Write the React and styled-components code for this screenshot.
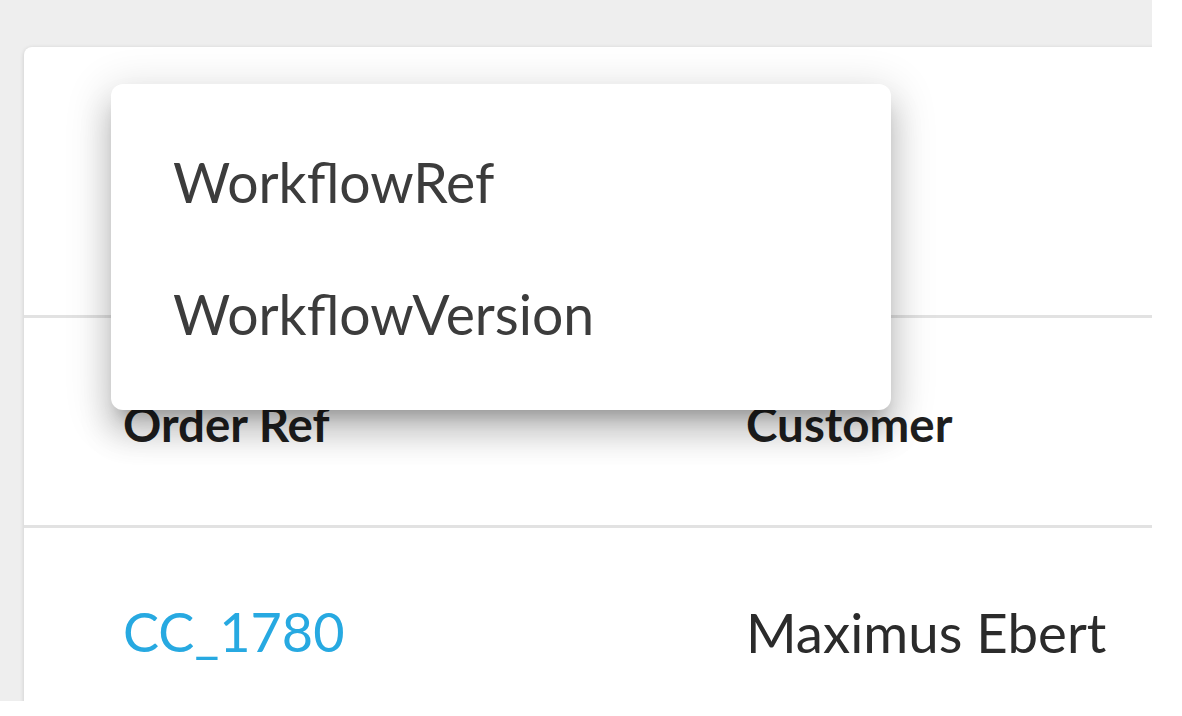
import React from "react";
import styled, { createGlobalStyle } from "styled-components";

const Global = createGlobalStyle`
  html, body { margin: 0; padding: 0; background: #ffffff; }
  body { font-family: Lato, "Open Sans", sans-serif; }
  * { box-sizing: border-box; }
`;

const Viewport = styled.div`
  position: relative;
  width: 1152px;
  height: 701px;
  background: #eeeeee;
  overflow: hidden;
  padding: 47px 0 0 24px;
`;

const Card = styled.div`
  width: 1160px;
  height: 720px;
  background: #ffffff;
  border-radius: 8px 0 0 0;
  box-shadow: 0 1px 4px rgba(0, 0, 0, 0.16);
  display: flex;
  flex-direction: column;
`;

const Toolbar = styled.div`
  height: 268px;
  flex: none;
`;

const Row = styled.div`
  display: grid;
  grid-template-columns: 623px 1fr;
  align-items: center;
  height: 210px;
  padding-left: 99px;
  border-top: 3px solid #e2e2e2;
  flex: none;
`;

const HeadCell = styled.div`
  font-family: Lato, sans-serif;
  font-weight: 700;
  font-size: 47.5px;
  color: #1f1f1f;
  white-space: nowrap;
  padding-top: 3px;
`;

const Cell = styled.div`
  font-family: Lato, sans-serif;
  font-weight: 400;
  font-size: ${(p) => (p.$link ? "54px" : "54.6px")};
  color: ${(p) => (p.$link ? "#27a9e1" : "#2b2b2b")};
  white-space: nowrap;
`;

const Menu = styled.ul`
  position: absolute;
  left: 111px;
  top: 84px;
  width: 780px;
  margin: 0;
  padding: 31px 0;
  list-style: none;
  background: #ffffff;
  border-radius: 12px;
  box-shadow: 0 15px 15px -9px rgba(0, 0, 0, 0.22),
    0 24px 30px 3px rgba(0, 0, 0, 0.15), 0 9px 42px 8px rgba(0, 0, 0, 0.12);
`;

const MenuItem = styled.li`
  height: 132px;
  display: flex;
  align-items: center;
  padding-left: 62px;
  font-family: Lato, sans-serif;
  font-size: 55.3px;
  color: #3c3c3c;
  white-space: nowrap;
`;

export default function App() {
  return (
    <>
      <Global />
      <Viewport>
        <Card>
          <Toolbar />
          <Row>
            <HeadCell>Order Ref</HeadCell>
            <HeadCell>Customer</HeadCell>
          </Row>
          <Row>
            <Cell $link>CC_1780</Cell>
            <Cell>Maximus Ebert</Cell>
          </Row>
        </Card>
        <Menu>
          <MenuItem>WorkflowRef</MenuItem>
          <MenuItem>WorkflowVersion</MenuItem>
        </Menu>
      </Viewport>
    </>
  );
}
